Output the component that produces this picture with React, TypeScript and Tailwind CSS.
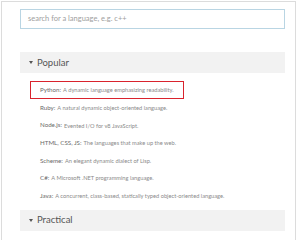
const languages = [
  { name: 'Python:', desc: 'A dynamic language emphasizing readability.', active: true },
  { name: 'Ruby:', desc: 'A natural dynamic object-oriented language.' },
  { name: 'Node.js:', desc: 'Evented I/O for v8 JavaScript.' },
  { name: 'HTML, CSS, JS:', desc: 'The languages that make up the web.' },
  { name: 'Scheme:', desc: 'An elegant dynamic dialect of Lisp.' },
  { name: 'C#:', desc: 'A Microsoft .NET programming language.' },
  { name: 'Java:', desc: 'A concurrent, class-based, statically typed object-oriented language.' },
];

function SectionHeader({ title }: { title: string }) {
  return (
    <div className="h-[21px] bg-[#f2f2f2] flex items-center pl-[9px] gap-[4px]">
      <span className="w-0 h-0 border-l-[2.5px] border-r-[2.5px] border-t-[3px] border-l-transparent border-r-transparent border-t-[#555]" />
      <span className="text-[9.5px] text-[#555] leading-none">{title}</span>
    </div>
  );
}

export default function App() {
  return (
    <div className="w-[300px] h-[240px] overflow-hidden bg-white font-['Lato',sans-serif]">
      <div className="ml-px mt-px w-[295px] h-[260px] border border-[#dcdcdc] pl-[18px] pr-[10px] pt-[7px]">
        <div className="h-[20px] border border-[#b9d5e3] flex items-center pl-[7px]">
          <span className="text-[7.5px] text-[#a0a0a0] leading-none">search for a language, e.g. c++</span>
        </div>

        <div className="mt-[23px]">
          <SectionHeader title="Popular" />
          <div className="pt-[8.5px] pl-[10px] pb-[5px]">
            {languages.map((l) => (
              <div key={l.name} className="h-[17.6px] flex items-center">
                <div
                  className={`h-[18px] inline-flex items-center px-[9px] border whitespace-nowrap ${
                    l.active ? 'border-[#d9232d]' : 'border-transparent'
                  }`}
                >
                  <span className="text-[6.2px] text-[#6a6a6a] leading-none">{l.name}</span>
                  <span className="text-[5.7px] text-[#8a8a8a] leading-none ml-[2px]">{l.desc}</span>
                </div>
              </div>
            ))}
          </div>
          <SectionHeader title="Practical" />
        </div>
      </div>
    </div>
  );
}
